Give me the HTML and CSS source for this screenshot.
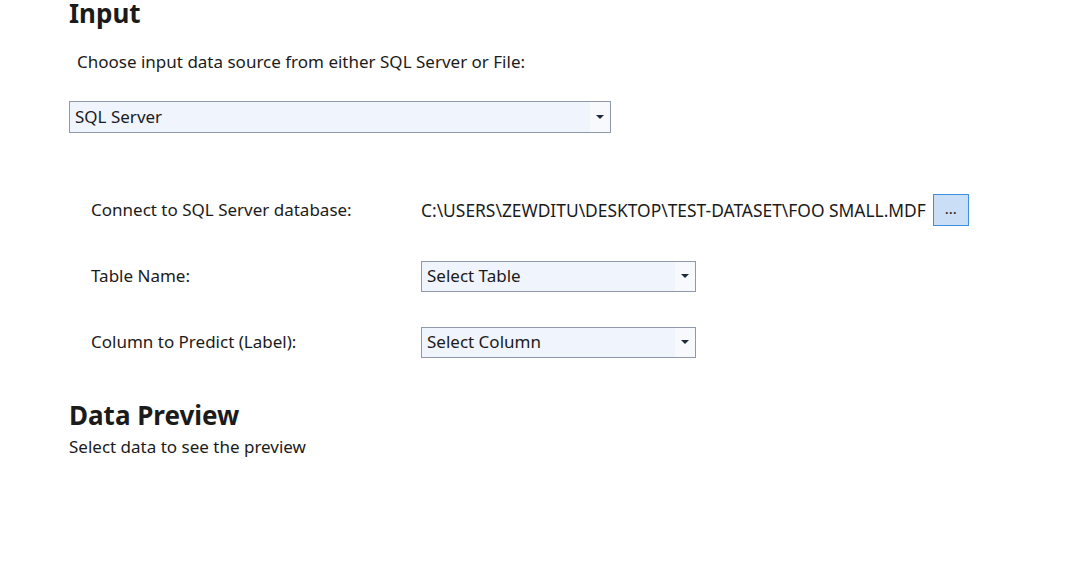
FILE: index.html
```html
<!DOCTYPE html>
<html lang="en">

<head>
    <meta charset="UTF-8">
    <title>Input</title>
    <link rel="stylesheet" href="styles.css">
</head>

<body>
    <section class="page">
        <h1>Input</h1>
        <p class="intro">Choose input data source from either SQL Server or File:</p>

        <!-- source picker -->
        <div class="combo combo-wide">
            <span class="combo-text">SQL Server</span>
            <span class="combo-arrow"></span>
        </div>

        <div class="form">
            <label class="form-label">Connect to SQL Server database:</label>
            <div class="form-field">
                <span class="path">C:\USERS\ZEWDITU\DESKTOP\TEST-DATASET\FOO SMALL.MDF</span>
                <button class="browse">...</button>
            </div>

            <label class="form-label">Table Name:</label>
            <div class="form-field">
                <div class="combo combo-small">
                    <span class="combo-text">Select Table</span>
                    <span class="combo-arrow"></span>
                </div>
            </div>

            <label class="form-label">Column to Predict (Label):</label>
            <div class="form-field">
                <div class="combo combo-small">
                    <span class="combo-text">Select Column</span>
                    <span class="combo-arrow"></span>
                </div>
            </div>
        </div>

        <h2>Data Preview</h2>
        <p class="preview-note">Select data to see the preview</p>
    </section>
</body>

</html>
```

FILE: styles.css
```css
/* Settings page: data input */
body {
    margin: 0;
    background: #fff;
    color: #1b1b1b;
    font-family: "Noto Sans", "Open Sans", Arial, sans-serif;
    font-size: 17px;
}

.page {
    padding-left: 69px;
}

h1,
h2 {
    margin: 0;
    font-size: 26px;
    font-weight: 700;
    line-height: 24px;
}

h1 {
    padding-top: 1px;
}

.intro {
    margin: 26px 0 0 8px;
    line-height: 22px;
}

/* Combo boxes */
.combo {
    display: flex;
    align-items: center;
    height: 30px;
    border: 1px solid #8f99aa;
    background: #f0f4fc;
}

.combo-wide {
    width: 540px;
    margin-top: 28px;
}

.combo-small {
    width: 273px;
    height: 29px;
}

.combo-text {
    flex: 1;
    padding-left: 5px;
    line-height: 22px;
}

.combo-arrow {
    width: 20px;
    height: 100%;
    background: #f8f9fd;
    position: relative;
}

.combo-arrow::after {
    content: "";
    position: absolute;
    left: 6px;
    top: calc(50% - 2px);
    border-left: 4px solid transparent;
    border-right: 4px solid transparent;
    border-top: 4px solid #1e2a3c;
}

/* Connection form */
.form {
    display: grid;
    grid-template-columns: 330px auto;
    row-gap: 34px;
    align-items: center;
    margin: 61px 0 0 22px;
}

.form-label {
    line-height: 22px;
}

.form-field {
    display: flex;
    align-items: center;
    gap: 7px;
    height: 32px;
}

.path {
    font-size: 17.4px;
    line-height: 22px;
}

.browse {
    width: 36px;
    height: 32px;
    border: 1px solid #3d8fe0;
    background: #cadff5;
    font-family: inherit;
    font-size: 15px;
    color: #1b1b1b;
    padding: 0 0 4px;
}

h2 {
    margin-top: 45px;
}

.preview-note {
    margin: 9px 0 0;
    line-height: 22px;
}
```
